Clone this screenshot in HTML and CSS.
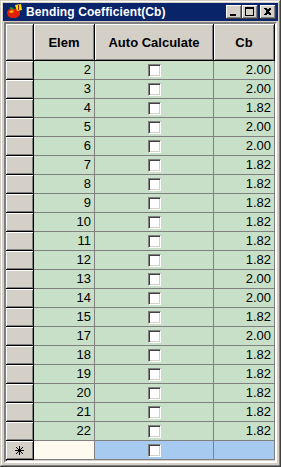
FILE: index.html
```html
<!DOCTYPE html>
<html lang="en">
<head>
  <meta charset="UTF-8" />
  <title>Bending Coefficient(Cb)</title>
  <link rel="stylesheet" href="styles.css">
</head>
<body>
  <div class="window">
    <div class="titlebar">
      <svg class="app-icon" width="16" height="16" viewBox="0 0 16 16">
        <path d="M1 9 C1 5 5 4 8 5 C11 4 15 6 14 10 C13 15 4 15 2 12 Z" fill="#e0200c"/>
        <path d="M3 8 C4 6 7 6 8 7 C7 9 5 10 3 8 Z" fill="#ffb000"/>
        <path d="M9 1 L15 0 L16 6 L11 7 Z" fill="#ffe000"/>
        <path d="M4 3 C6 4 8 4 8 5 C6 6 3 5 4 3 Z" fill="#30a020"/>
        <rect x="12" y="1" width="1" height="5" fill="#a02000"/>
      </svg>
      <span class="title">Bending Coefficient(Cb)</span>
      <div class="title-buttons">
        <button class="tb-btn">
          <svg width="16" height="14" viewBox="0 0 16 14" shape-rendering="crispEdges"><rect x="4" y="9" width="6" height="2" fill="#000"/></svg>
        </button>
        <button class="tb-btn">
          <svg width="16" height="14" viewBox="0 0 16 14" shape-rendering="crispEdges"><path d="M3 2h9v9h-9z M4 4v6h7v-6z" fill="#000" fill-rule="evenodd"/></svg>
        </button>
        <button class="tb-btn close">
          <svg width="16" height="14" viewBox="0 0 16 14" shape-rendering="crispEdges"><path d="M4 3h2l1 1h1l1-1h2v1l-2 2v1l2 2v1h-2l-1-1h-1l-1 1h-2v-1l2-2v-1l-2-2z" fill="#000"/></svg>
        </button>
      </div>
    </div>

    <div class="grid-frame">
      <div class="grid">
        <div class="hdr"></div>
        <div class="hdr">Elem</div>
        <div class="hdr">Auto Calculate</div>
        <div class="hdr">Cb</div>

        <div class="rowhdr"></div><div class="cell num">2</div><div class="cell chk"><span class="checkbox"></span></div><div class="cell num">2.00</div>
        <div class="rowhdr"></div><div class="cell num">3</div><div class="cell chk"><span class="checkbox"></span></div><div class="cell num">2.00</div>
        <div class="rowhdr"></div><div class="cell num">4</div><div class="cell chk"><span class="checkbox"></span></div><div class="cell num">1.82</div>
        <div class="rowhdr"></div><div class="cell num">5</div><div class="cell chk"><span class="checkbox"></span></div><div class="cell num">2.00</div>
        <div class="rowhdr"></div><div class="cell num">6</div><div class="cell chk"><span class="checkbox"></span></div><div class="cell num">2.00</div>
        <div class="rowhdr"></div><div class="cell num">7</div><div class="cell chk"><span class="checkbox"></span></div><div class="cell num">1.82</div>
        <div class="rowhdr"></div><div class="cell num">8</div><div class="cell chk"><span class="checkbox"></span></div><div class="cell num">1.82</div>
        <div class="rowhdr"></div><div class="cell num">9</div><div class="cell chk"><span class="checkbox"></span></div><div class="cell num">1.82</div>
        <div class="rowhdr"></div><div class="cell num">10</div><div class="cell chk"><span class="checkbox"></span></div><div class="cell num">1.82</div>
        <div class="rowhdr"></div><div class="cell num">11</div><div class="cell chk"><span class="checkbox"></span></div><div class="cell num">1.82</div>
        <div class="rowhdr"></div><div class="cell num">12</div><div class="cell chk"><span class="checkbox"></span></div><div class="cell num">1.82</div>
        <div class="rowhdr"></div><div class="cell num">13</div><div class="cell chk"><span class="checkbox"></span></div><div class="cell num">2.00</div>
        <div class="rowhdr"></div><div class="cell num">14</div><div class="cell chk"><span class="checkbox"></span></div><div class="cell num">2.00</div>
        <div class="rowhdr"></div><div class="cell num">15</div><div class="cell chk"><span class="checkbox"></span></div><div class="cell num">1.82</div>
        <div class="rowhdr"></div><div class="cell num">17</div><div class="cell chk"><span class="checkbox"></span></div><div class="cell num">2.00</div>
        <div class="rowhdr"></div><div class="cell num">18</div><div class="cell chk"><span class="checkbox"></span></div><div class="cell num">1.82</div>
        <div class="rowhdr"></div><div class="cell num">19</div><div class="cell chk"><span class="checkbox"></span></div><div class="cell num">1.82</div>
        <div class="rowhdr"></div><div class="cell num">20</div><div class="cell chk"><span class="checkbox"></span></div><div class="cell num">1.82</div>
        <div class="rowhdr"></div><div class="cell num">21</div><div class="cell chk"><span class="checkbox"></span></div><div class="cell num">1.82</div>
        <div class="rowhdr"></div><div class="cell num">22</div><div class="cell chk"><span class="checkbox"></span></div><div class="cell num">1.82</div>

        <div class="rowhdr new-marker">
          <svg width="9" height="9" viewBox="0 0 9 9" shape-rendering="crispEdges"><path d="M4 0h1v9h-1z M0 4h9v1h-9z M1 1h1v1h-1z M2 2h1v1h-1z M3 3h1v1h-1z M5 5h1v1h-1z M6 6h1v1h-1z M7 7h1v1h-1z M7 1h1v1h-1z M6 2h1v1h-1z M5 3h1v1h-1z M3 5h1v1h-1z M2 6h1v1h-1z M1 7h1v1h-1z" fill="#000"/></svg>
        </div>
        <div class="cell num new-edit"></div>
        <div class="cell chk new-sel"><span class="checkbox"></span></div>
        <div class="cell num new-sel"></div>
      </div>
    </div>
  </div>
</body>
</html>
```

FILE: styles.css
```css
:root {
  --face: #d4d0c8;
  --shadow: #808080;
  --dark: #404040;
  --title-bg: #0a246a;
  --cell-bg: #c8e0c8;
  --grid-line: #808080;
  --new-edit: #fffaf0;
  --new-sel: #a6caf0;
}

* {
  margin: 0;
  padding: 0;
  box-sizing: border-box;
}

body {
  background: var(--face);
  font-family: "Liberation Sans", Arial, sans-serif;
}

.window {
  width: 281px;
  height: 467px;
  padding: 3px 3px 4px 3px;
  background: var(--face);
  display: flex;
  flex-direction: column;
  box-shadow: inset -1px -1px var(--dark), inset 1px 1px var(--face),
              inset -2px -2px var(--shadow), inset 2px 2px #fff;
}

.titlebar {
  height: 18px;
  background: var(--title-bg);
  display: flex;
  align-items: center;
  padding: 0 2px 0 3px;
}

.app-icon {
  flex: none;
  margin-right: 4px;
}

.title {
  flex: 1;
  color: #fff;
  font-weight: bold;
  font-size: 12px;
  letter-spacing: 0.1px;
  white-space: nowrap;
}

.title-buttons {
  display: flex;
}

.tb-btn {
  width: 16px;
  height: 14px;
  border: none;
  background: var(--face);
  display: block;
  box-shadow: inset -1px -1px var(--dark), inset 1px 1px #fff,
              inset -2px -2px var(--shadow), inset 2px 2px var(--face);
}

.tb-btn svg {
  display: block;
}

.tb-btn.close {
  margin-left: 2px;
}

.grid-frame {
  margin: 1px 1px 0 1px;
  flex: 1;
  border: 2px solid;
  border-color: var(--shadow) #fff #fff var(--shadow);
  box-shadow: inset 1px 1px var(--dark);
  background: var(--face);
}

.grid {
  display: grid;
  grid-template-columns: 28px 61px 119px 61px;
  grid-auto-rows: 19px;
  grid-template-rows: 37px;
}

.hdr,
.rowhdr {
  background: var(--face);
  border-right: 1px solid #000;
  border-bottom: 1px solid #000;
  box-shadow: inset 1px 1px #fff, inset -1px -1px var(--shadow);
}

.hdr {
  display: flex;
  align-items: center;
  justify-content: center;
  font-weight: bold;
  font-size: 13px;
  color: #000;
}

.new-marker {
  display: flex;
  align-items: center;
  justify-content: center;
}

.cell {
  background: var(--cell-bg);
  border-right: 1px solid var(--grid-line);
  border-bottom: 1px solid var(--grid-line);
  font-size: 13px;
  line-height: 18px;
  color: #000;
}

.num {
  text-align: right;
  padding-right: 3px;
}

.chk {
  display: flex;
  align-items: center;
  justify-content: center;
}

.checkbox {
  width: 13px;
  height: 13px;
  background: #fff;
  border: 1px solid;
  border-color: var(--shadow) #fff #fff var(--shadow);
  box-shadow: inset 1px 1px var(--dark), inset -1px -1px var(--face);
}

.new-edit {
  background: var(--new-edit);
}

.new-sel {
  background: var(--new-sel);
}
```
